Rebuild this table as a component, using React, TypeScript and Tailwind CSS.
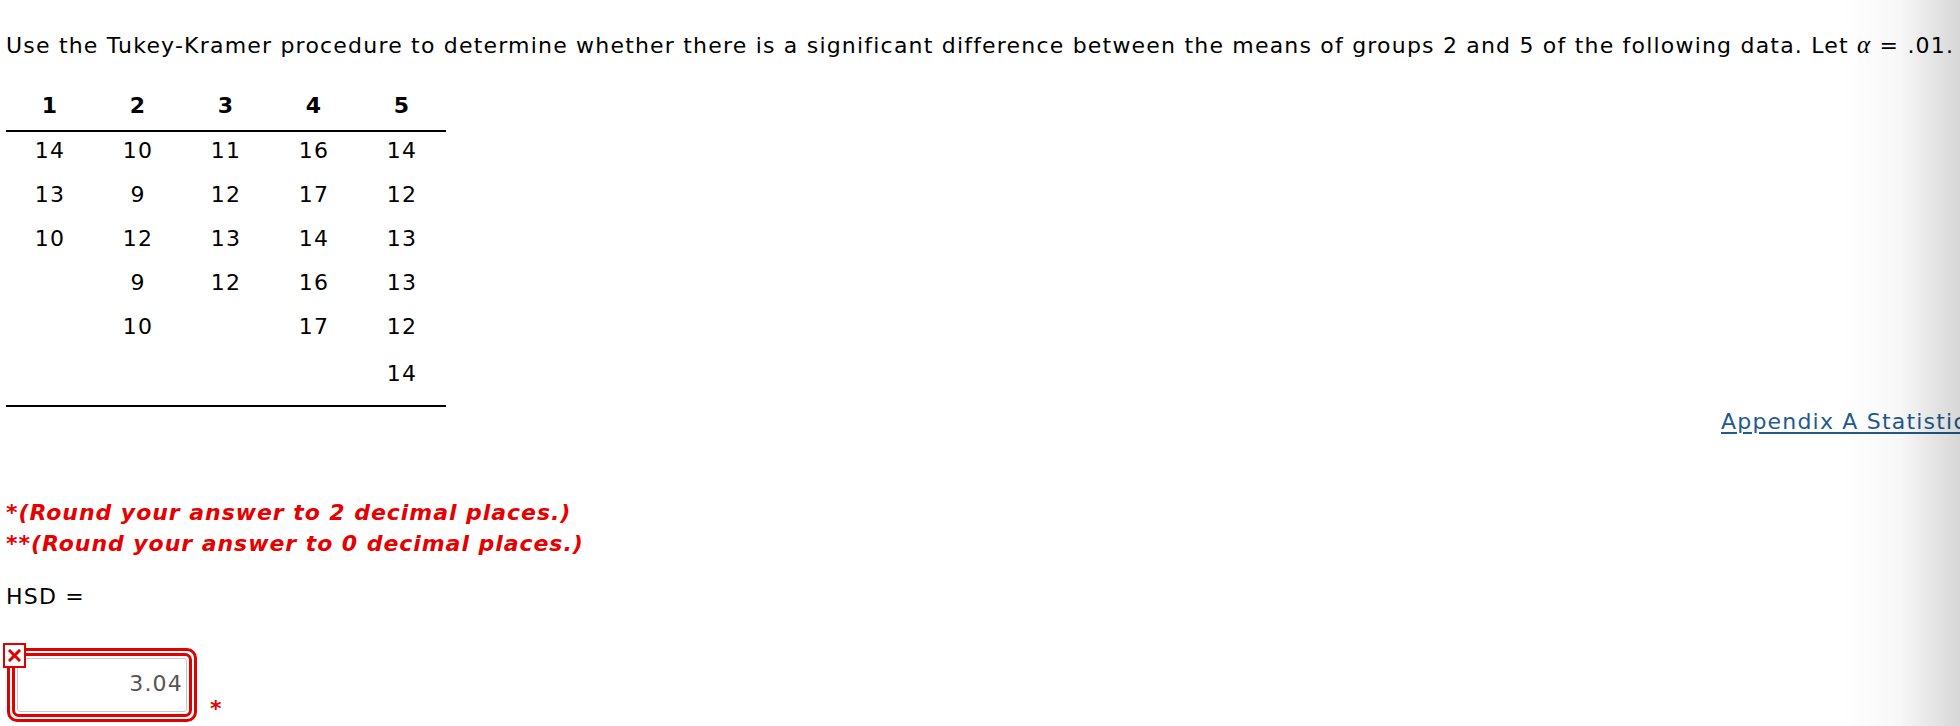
import React from 'react';

const headers = [1, 2, 3, 4, 5];

// rows of the data table, blank where a group has no value
const rows: (number | null)[][] = [
  [14, 10, 11, 16, 14],
  [13, 9, 12, 17, 12],
  [10, 12, 13, 14, 13],
  [null, 9, 12, 16, 13],
  [null, 10, null, 17, 12],
  [null, null, null, null, 14],
];

export default function App() {
  return (
    <div className="relative min-h-[726px] w-full overflow-hidden bg-white pl-[6px] pt-[32px] font-['DejaVu_Sans',Verdana,sans-serif] text-[22px] leading-[26px] tracking-[1.2px] text-black">
      <p className="whitespace-nowrap">
        Use the Tukey-Kramer procedure to determine whether there is a significant difference between the means of groups 2 and 5 of the following data. Let{' '}
        <span className="font-['Liberation_Serif',serif] text-[25px] italic">α</span> = .01.
      </p>

      {/* data table */}
      <div className="mt-[34px] w-[440px]">
        <div className="grid grid-cols-5 pb-[11px] text-center font-bold">
          {headers.map((h) => (
            <div key={h}>{h}</div>
          ))}
        </div>
        <div className="border-y-2 border-black pb-[5px]">
          {rows.map((r, i) => (
            <div
              key={i}
              className={
                i === rows.length - 1
                  ? 'grid h-[48px] grid-cols-5 pt-[9px] text-center'
                  : 'grid h-[44px] grid-cols-5 pt-[6px] text-center'
              }
            >
              {r.map((v, j) => (
                <div key={j}>{v ?? ''}</div>
              ))}
            </div>
          ))}
        </div>
      </div>

      <div className="mt-[2px] whitespace-nowrap pl-[1715px]">
        <a href="#" className="text-[#1f5b8e] underline underline-offset-[3px]">
          Appendix A Statistical Tables
        </a>
      </div>

      <div className="mt-[62px] font-bold italic leading-[31px] tracking-[0.95px] text-[#e60000]">
        <p>*(Round your answer to 2 decimal places.)</p>
        <p>**(Round your answer to 0 decimal places.)</p>
      </div>

      <p className="mt-[25px]">HSD =</p>

      {/* answer box, marked wrong */}
      <div className="mt-[38px] flex items-end">
        <div className="relative ml-[1px] rounded-[10px] border-[3px] border-[#e00000] p-[2px]">
          <div className="rounded-[7px] border-[3px] border-[#e00000] p-[2px]">
            <input
              readOnly
              value="3.04"
              className="block h-[54px] w-[170px] rounded-[3px] border border-[#c8c8c8] bg-white pb-[4px] pr-[3px] text-right text-[22px] text-[#555]"
            />
          </div>
          <div className="absolute -left-[7px] -top-[8px] flex h-[25px] w-[23px] items-center justify-center border-2 border-[#e00000] bg-white">
            <svg width="13" height="13" viewBox="0 0 13 13">
              <path d="M2 2 L11 11 M11 2 L2 11" stroke="#e00000" strokeWidth="3" strokeLinecap="square" />
            </svg>
          </div>
        </div>
        <span className="ml-[13px] font-bold text-[#e60000]">*</span>
      </div>

      {/* shade along the right edge */}
      <div className="pointer-events-none absolute right-0 top-0 h-full w-[120px] bg-linear-to-r from-black/0 via-black/[0.03] to-black/[0.16]" />
    </div>
  );
}
